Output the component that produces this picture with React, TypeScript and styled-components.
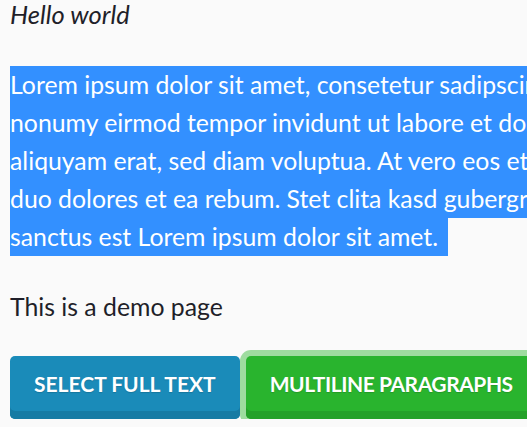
import styled, { createGlobalStyle } from 'styled-components';

const GlobalStyle = createGlobalStyle`
  html, body {
    margin: 0;
    padding: 0;
    overflow: hidden;
    background: #fafafa;
  }
  body {
    font-family: Lato, "Noto Sans", sans-serif;
    color: #1f1f29;
  }
`;

const Page = styled.div`
  padding: 0 10px;
  width: 760px;
`;

const Greeting = styled.p`
  margin: 0;
  font-size: 25.5px;
  line-height: 28px;
  font-style: italic;
`;

const Paragraph = styled.div`
  margin-top: 38px;
  font-size: 24.8px;
  line-height: 38px;
`;

const Line = styled.span`
  display: block;
  width: fit-content;
  padding-right: 4px;
  white-space: pre;
  background: #3390ff;
  color: #fff;
`;

const Demo = styled.p`
  margin: 37px 0 0;
  font-size: 24.8px;
  line-height: 28px;
`;

const Actions = styled.div`
  display: flex;
  gap: 6px;
  margin-top: 35px;
`;

interface ButtonProps {
  $color: string;
  $shade: string;
  $ring?: string;
  $tight?: boolean;
}

const Button = styled.button<ButtonProps>`
  height: 63px;
  padding: 0 24px 8px;
  border: none;
  border-radius: 5px;
  background: ${({ $color }) => $color};
  box-shadow: inset 0 -8px 0 ${({ $shade }) => $shade}
    ${({ $ring }) => ($ring ? `, 0 0 0 6px ${$ring}` : '')};
  color: #fff;
  font-family: Lato, "Noto Sans", sans-serif;
  font-size: 21px;
  font-weight: 700;
  letter-spacing: ${({ $tight }) => ($tight ? '-0.45px' : '0')};
  text-transform: uppercase;
  text-shadow: 0 1px 1px rgba(0, 0, 0, 0.15);
  white-space: nowrap;
  flex-shrink: 0;
  cursor: pointer;
`;

const lines = [
  'Lorem ipsum dolor sit amet, consetetur sadipscing elitr, sed diam',
  'nonumy eirmod tempor invidunt ut labore et dolore magna',
  'aliquyam erat, sed diam voluptua. At vero eos et accusam et justo',
  'duo dolores et ea rebum. Stet clita kasd gubergren, no sea takimata',
  'sanctus est Lorem ipsum dolor sit amet. ',
];

export default function App() {
  return (
    <>
      <GlobalStyle />
      <Page>
        <Greeting>Hello world</Greeting>
        <Paragraph>
          {lines.map((line) => (
            <Line key={line}>{line}</Line>
          ))}
        </Paragraph>
        <Demo>This is a demo page</Demo>
        <Actions>
          <Button $color="#1a8bb9" $shade="#167ba4">
            Select full text
          </Button>
          <Button $color="#29b42e" $shade="#24a129" $ring="#9edc9f" $tight>
            Multiline paragraphs
          </Button>
        </Actions>
      </Page>
    </>
  );
}
